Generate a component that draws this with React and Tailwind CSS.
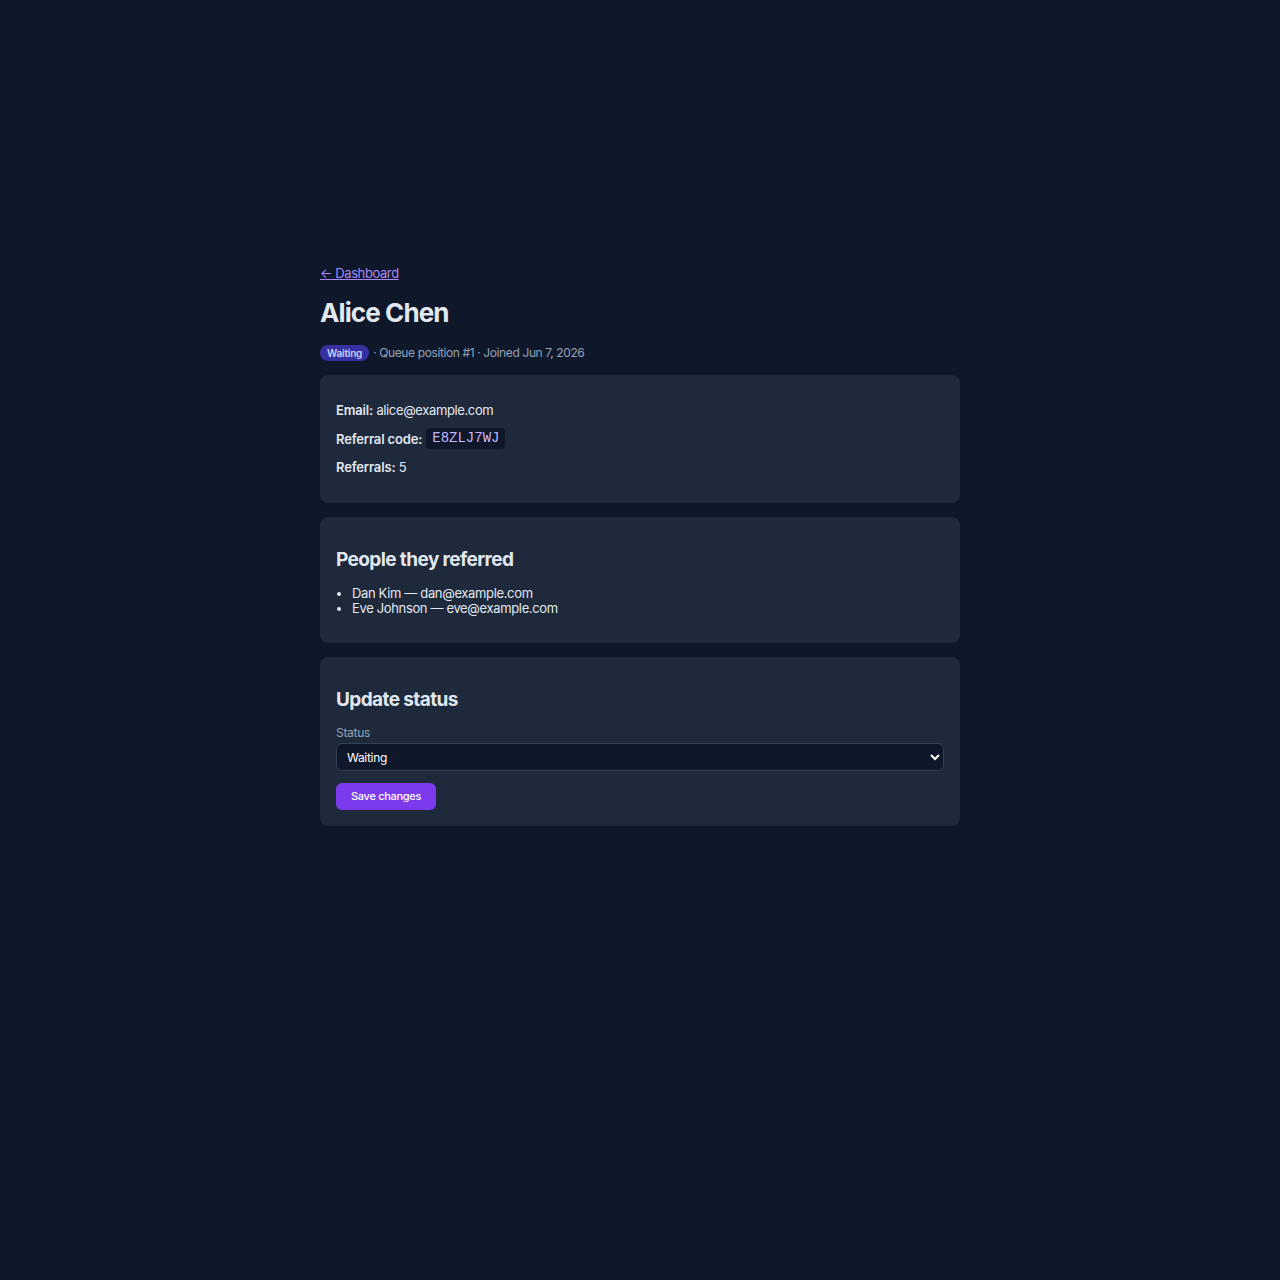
export default function App() {
  return (
    <div className="min-h-[1280px] w-full bg-[#0f172a] text-[#e2e8f0]" style={{ fontFamily: "Inter, 'Noto Sans', sans-serif" }}>
      <div className="mx-auto w-[640px] pt-[264px]">
        <a href="#" className="block text-[13px] leading-[18px] tracking-[-0.4px] text-[#a78bfa] underline">← Dashboard</a>
        <h1 className="mt-[15px] text-[26px] leading-[32px] font-bold tracking-[-0.9px] text-[#e2e8f0]">Alice Chen</h1>
        <div className="mt-[16px] flex items-center text-[12px] leading-[16px] tracking-[-0.38px] text-[#94a3b8]">
          <span className="rounded-full bg-[#3730a3] px-[7px] text-[10px] leading-[16px] font-semibold tracking-[-0.2px] text-[#c7d2fe]">Waiting</span>
          <span className="ml-[4px]">· Queue position #1 · Joined Jun 7, 2026</span>
        </div>
        <div className="mt-[14px] rounded-[8px] bg-[#1e293b] px-[16px] pt-[17px] pb-[18px] text-[13px] tracking-[-0.37px]">
          <p className="my-[8px] leading-[20px]"><strong className="font-semibold tracking-[-0.15px]">Email:</strong> alice@example.com</p>
          <p className="my-[8px] flex items-center leading-[20px]">
            <strong className="font-semibold tracking-[-0.15px]">Referral code:</strong>
            <code className="ml-[4px] rounded-[4px] bg-[#0f172a] px-[6px] py-[1px] text-[14px] leading-[19px] tracking-normal text-[#c4b5fd]" style={{ fontFamily: "'Liberation Mono', 'DejaVu Sans Mono', monospace" }}>E8ZLJ7WJ</code>
          </p>
          <p className="my-[8px] leading-[20px]"><strong className="font-semibold tracking-[-0.15px]">Referrals:</strong> 5</p>
        </div>
        <div className="mt-[14px] rounded-[8px] bg-[#1e293b] px-[16px] pt-[16px] pb-[27px]">
          <h2 className="mt-[15px] text-[19px] leading-[24px] font-bold tracking-[-0.6px]">People they referred</h2>
          <ul className="mt-[14px] list-disc pl-[16px] text-[13px] leading-[15px] tracking-[-0.35px]">
            <li>Dan Kim — dan@example.com</li>
            <li>Eve Johnson — eve@example.com</li>
          </ul>
        </div>
        <div className="mt-[14px] rounded-[8px] bg-[#1e293b] px-[16px] pt-[16px] pb-[16px]">
          <h2 className="mt-[15px] text-[19px] leading-[24px] font-bold tracking-[-0.6px]">Update status</h2>
          <label className="mt-[13px] block text-[12px] leading-[16px] tracking-[-0.3px] text-[#94a3b8]">Status</label>
          <select className="mt-[2px] block h-[28px] w-full rounded-[6px] border border-[#334155] bg-[#0f172a] px-[6px] text-[12px] tracking-[-0.3px] text-white" defaultValue="waiting">
            <option value="waiting">Waiting</option>
            <option value="invited">Invited</option>
            <option value="joined">Joined</option>
          </select>
          <button className="mt-[12px] h-[27px] rounded-[6px] bg-[#7c3aed] px-[15px] text-[11px] font-medium tracking-[-0.3px] text-white">Save changes</button>
        </div>
      </div>
    </div>
  );
}
